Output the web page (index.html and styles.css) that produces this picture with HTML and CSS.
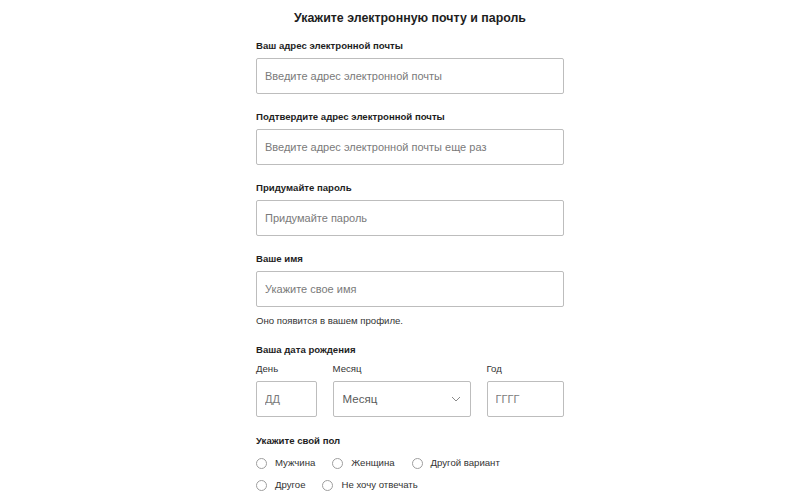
FILE: index.html
```html
<!DOCTYPE html>
<html lang="ru">
<head>
<meta charset="utf-8">
<title>Регистрация</title>
<link rel="stylesheet" href="styles.css">
</head>
<body>
<form class="form">
  <h1 class="title">Укажите электронную почту и пароль</h1>

  <div class="group">
    <label class="label">Ваш адрес электронной почты</label>
    <input class="field" type="text" placeholder="Введите адрес электронной почты">
  </div>

  <div class="group">
    <label class="label">Подтвердите адрес электронной почты</label>
    <input class="field" type="text" placeholder="Введите адрес электронной почты еще раз">
  </div>

  <div class="group">
    <label class="label">Придумайте пароль</label>
    <input class="field" type="text" placeholder="Придумайте пароль">
  </div>

  <div class="group group-name">
    <label class="label">Ваше имя</label>
    <input class="field" type="text" placeholder="Укажите свое имя">
    <p class="hint">Оно появится в вашем профиле.</p>
  </div>

  <div class="group group-date">
    <div class="label">Ваша дата рождения</div>
    <div class="date-row">
      <div class="date-col col-day">
        <span class="sublabel">День</span>
        <input class="field" type="text" placeholder="ДД">
      </div>
      <div class="date-col col-month">
        <span class="sublabel">Месяц</span>
        <div class="field select">
          <span class="select-text">Месяц</span>
          <svg class="chevron" width="10" height="6" viewBox="0 0 10 6"><polyline points="1,1 5,5 9,1" fill="none" stroke="#8a8a8a" stroke-width="1"/></svg>
        </div>
      </div>
      <div class="date-col col-year">
        <span class="sublabel">Год</span>
        <input class="field" type="text" placeholder="ГГГГ">
      </div>
    </div>
  </div>

  <div class="group group-gender">
    <div class="label">Укажите свой пол</div>
    <div class="radio-row">
      <span class="radio"><span class="dot"></span>Мужчина</span>
      <span class="radio"><span class="dot"></span>Женщина</span>
      <span class="radio"><span class="dot"></span>Другой вариант</span>
    </div>
    <div class="radio-row">
      <span class="radio"><span class="dot"></span>Другое</span>
      <span class="radio"><span class="dot"></span>Не хочу отвечать</span>
    </div>
  </div>
</form>
</body>
</html>
```

FILE: styles.css
```css
html, body {
  margin: 0;
  padding: 0;
  background: #ffffff;
}
body {
  font-family: "Liberation Sans", Arial, sans-serif;
  color: #222222;
}
.form {
  width: 308px;
  margin: 0 0 0 256px;
  padding-top: 9px;
  display: flex;
  flex-direction: column;
}
.title {
  margin: 0 0 12px 0;
  font-size: 12.4px;
  line-height: 18px;
  font-weight: bold;
  text-align: center;
  color: #1e1e1e;
}
.group {
  display: flex;
  flex-direction: column;
  margin-bottom: 16px;
}
.label {
  font-size: 9.6px;
  line-height: 14px;
  font-weight: bold;
  color: #1e1e1e;
  margin-bottom: 5px;
}
.field {
  box-sizing: border-box;
  height: 36px;
  width: 100%;
  border: 1px solid #bdbdbd;
  border-radius: 2px;
  padding: 0 8px;
  font-family: "Liberation Sans", Arial, sans-serif;
  font-size: 11px;
  color: #333;
  background: #fff;
  outline: none;
}
.field::placeholder {
  color: #7a7a7a;
}
.hint {
  margin: 7px 0 0 0;
  font-size: 9.6px;
  line-height: 14px;
  color: #333;
}
.group-name {
  margin-bottom: 15px;
}
.date-row {
  display: flex;
  gap: 16px;
}
.date-col {
  display: flex;
  flex-direction: column;
}
.col-day { width: 61px; }
.col-month { width: 139px; }
.col-year { width: 78px; }
.sublabel {
  font-size: 9.6px;
  line-height: 14px;
  color: #333;
  margin-bottom: 5px;
}
.select {
  display: flex;
  align-items: center;
  justify-content: space-between;
  padding: 0 9px 0 9px;
}
.select-text {
  font-size: 11.5px;
  color: #5a5a5a;
}
.chevron {
  display: block;
}
.group-date {
  margin-bottom: 17px;
}
.group-gender .label {
  margin-bottom: 8px;
}
.radio-row {
  display: flex;
  gap: 17px;
  margin-bottom: 8px;
}
.radio {
  display: flex;
  align-items: center;
  font-size: 9.6px;
  line-height: 14px;
  color: #333;
}
.dot {
  box-sizing: border-box;
  width: 11px;
  height: 11px;
  border: 1px solid #9e9e9e;
  border-radius: 50%;
  margin-right: 8px;
  background: #fff;
}
```
